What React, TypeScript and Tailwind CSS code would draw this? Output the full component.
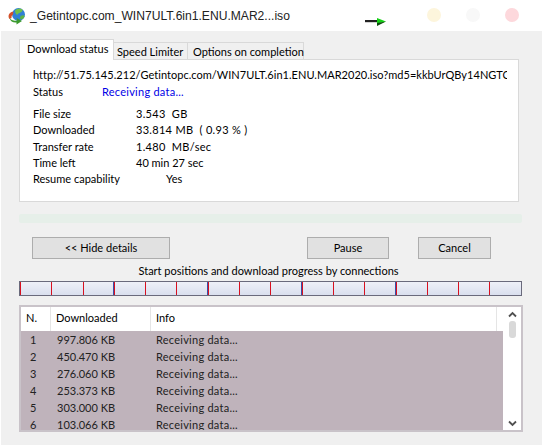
import React from 'react';

const font = { fontFamily: 'Lato, sans-serif' };

const stats = [
    { label: 'File size', value: '3.543  GB', cls: 'ml-[58px] tracking-[0.3px]' },
    { label: 'Downloaded', value: '33.814 MB  ( 0.93 % )', cls: 'ml-[58px] tracking-[0.3px]' },
    { label: 'Transfer rate', value: '1.480  MB/sec', cls: 'ml-[58px] tracking-[0.3px]' },
    { label: 'Time left', value: '40 min 27 sec', cls: 'ml-[58px]' },
    { label: 'Resume capability', value: 'Yes', cls: 'ml-[88px]' },
];

const connections = [
    { n: 1, size: '997.806' },
    { n: 2, size: '450.470' },
    { n: 3, size: '276.060' },
    { n: 4, size: '253.373' },
    { n: 5, size: '303.000' },
    { n: 6, size: '103.066' },
];

const Logo = () => (
    <svg width="18" height="17" viewBox="0 0 18 17" className="shrink-0">
        <circle cx="10.5" cy="6.5" r="6.5" fill="#2f7fd6" />
        <path d="M7 2.5 Q10 -0.5 14 1 Q15.5 3 12.5 4.5 Q10 5 9 7 Q7 6 7 2.5Z" fill="#6fc04a" />
        <path d="M12.5 8 Q16.5 6.5 16.5 8.5 Q15.5 11.5 12.5 11.5 Q11.5 10 12.5 8Z" fill="#5fb444" />
        <path d="M0.5 8 Q1 4 5.5 3.5 L5 6.5 Q3 7.5 3.5 10 L1.5 11 Q0.5 10 0.5 8Z" fill="#d4502a" />
        <path d="M1.5 10 Q4 13.5 9 12.5 L8.5 10 L14 13 L8.5 16.5 L8.5 14.5 Q3 15 1.5 10Z" fill="#3c9a2e" />
    </svg>
);

const Button = ({ label, cls }: { label: string; cls: string }) => (
    <button className={`h-[22px] bg-[#e1e1e1] border border-[#adadad] text-[11px] leading-[18px] text-black ${cls}`}>
        {label}
    </button>
);

const ChevronUp = () => (
    <svg width="9" height="7" viewBox="0 0 9 7">
        <path d="M1 5.5 L4.5 2 L8 5.5" fill="none" stroke="#505050" strokeWidth="1.8" />
    </svg>
);

const ChevronDown = () => (
    <svg width="9" height="7" viewBox="0 0 9 7">
        <path d="M1 1.5 L4.5 5 L8 1.5" fill="none" stroke="#505050" strokeWidth="1.8" />
    </svg>
);

const App: React.FC = () => {
    const ticks = Array.from({ length: 16 }, (_, i) => i);

    return (
        <div className="w-[543px] h-[445px] bg-white flex flex-col overflow-hidden text-black" style={font}>
            {/* title bar */}
            <div className="h-[31px] shrink-0 flex items-start relative">
                <div className="ml-[8px] mt-[8px]">
                    <Logo />
                </div>
                <span className="ml-[4px] mt-[6px] text-[12.1px] leading-[20px] text-[#222] whitespace-nowrap font-['Liberation_Sans',sans-serif]">
                    _Getintopc.com_WIN7ULT.6in1.ENU.MAR2...iso
                </span>
                <svg width="21" height="8" viewBox="0 0 21 8" className="absolute left-[365px] top-[18px]">
                    <rect x="0" y="2" width="13" height="2.2" fill="#222" />
                    <path d="M12 0 L21 3.5 L12 5.5Z" fill="#14d014" />
                    <path d="M12 8 L21 3.5 L12 5Z" fill="#0a4a0a" />
                </svg>
                <div className="absolute left-[427px] top-[8px] flex gap-[25px]">
                    <div className="w-[14px] h-[14px] rounded-full bg-[#fdf5dc]" />
                    <div className="w-[14px] h-[14px] rounded-full bg-[#f8f8f8]" />
                    <div className="w-[14px] h-[14px] rounded-full bg-[#fdd8dc]" />
                </div>
            </div>

            {/* body */}
            <div className="ml-[1px] w-[541px] flex-1 bg-[#f0f0f0] pl-[18px] pr-[19px] pt-[8px] flex flex-col">
                {/* tabs */}
                <div className="flex items-end h-[21px] relative z-10 text-[11px]">
                    <div className="w-[95px] h-[21px] bg-white border border-[#d9d9d9] border-b-0 pl-[7px] leading-[18px] whitespace-nowrap">
                        Download status
                    </div>
                    <div className="w-[74px] h-[18px] bg-[#f0f0f0] border-r border-t border-[#d9d9d9] border-b pl-[3px] leading-[17px] whitespace-nowrap">
                        Speed Limiter
                    </div>
                    <div className="w-[116px] h-[18px] bg-[#f0f0f0] border-r border-t border-[#d9d9d9] border-b pl-[5px] leading-[17px] whitespace-nowrap">
                        Options on completion
                    </div>
                </div>

                {/* status panel */}
                <div className="w-[500px] h-[143px] -mt-px bg-white border border-[#d9d9d9] pl-[13px] pt-[7px] text-[11px] leading-[16px]">
                    <div className="w-[474px] overflow-hidden whitespace-nowrap tracking-[0.03px]">
                        http://51.75.145.212/Getintopc.com/WIN7ULT.6in1.ENU.MAR2020.iso?md5=kkbUrQBy14NGTQusT
                    </div>
                    <div className="flex mt-[1px]">
                        <span className="w-[69px]">Status</span>
                        <span className="text-[#0000e6] tracking-[0.25px]">Receiving data...</span>
                    </div>
                    <div className="mt-[6px] flex flex-col">
                        {stats.map((s) => (
                            <div key={s.label} className="flex h-[16.3px] whitespace-pre">
                                <span className="w-[45px] whitespace-nowrap">{s.label}</span>
                                <span className={s.cls}>{s.value}</span>
                            </div>
                        ))}
                    </div>
                </div>

                {/* overall progress */}
                <div className="mt-[12px] w-[503px] h-[9px] rounded-[2px] bg-[#e6efe9]" />

                {/* buttons */}
                <div className="mt-[14px] w-[503px] flex">
                    <Button label="<< Hide details" cls="ml-[13px] w-[138px]" />
                    <Button label="Pause" cls="ml-[137px] w-[82px]" />
                    <Button label="Cancel" cls="ml-[29px] w-[73px]" />
                </div>

                <div className="mt-[3px] w-[499px] text-center text-[11px] leading-[17px]">
                    Start positions and download progress by connections
                </div>

                {/* connection segments */}
                <div className="mt-[2px] w-[503px] h-[15px] border border-[#6a6a7c] bg-gradient-to-b from-[#eef0f8] to-[#dadfee] flex">
                    {ticks.map((i) => (
                        <div
                            key={i}
                            className={`w-[31.3px] h-full border-l border-[#d81020] ${i % 3 === 0 && i > 0 && i < 15 ? 'shadow-[-1px_0_0_#3a50a8]' : ''}`}
                        />
                    ))}
                </div>

                {/* connections list */}
                <div className="mt-[9px] w-[504px] h-[127px] border-2 border-[#c9c3c9] bg-white flex overflow-hidden text-[11px]">
                    <div className="w-[482px] flex flex-col">
                        <div className="h-[24px] shrink-0 flex leading-[22px] bg-white">
                            <div className="w-[30px] pl-[5px] border-r border-[#e5e5e5]">N.</div>
                            <div className="w-[100px] pl-[5px] border-r border-[#e5e5e5]">Downloaded</div>
                            <div className="w-[346px] pl-[5px] border-r border-[#e5e5e5]">Info</div>
                        </div>
                        <div className="flex-1 bg-[#bfb3bb] overflow-hidden">
                            {connections.map((c) => (
                                <div key={c.n} className="h-[17px] flex leading-[17px] text-[#222]">
                                    <div className="w-[30px] pl-[9px]">{c.n}</div>
                                    <div className="w-[100px] pl-[6px] whitespace-pre">{c.size} KB</div>
                                    <div className="pl-[5px] tracking-[0.25px]">Receiving data...</div>
                                </div>
                            ))}
                        </div>
                    </div>
                    <div className="flex-1 flex flex-col items-center pt-[4px] pb-[3px]">
                        <ChevronUp />
                        <div className="w-[7px] h-[17px] mt-[3px] rounded-[3px] bg-[#d9d9d9]" />
                        <div className="mt-auto">
                            <ChevronDown />
                        </div>
                    </div>
                </div>
            </div>
        </div>
    );
};

export default App;
